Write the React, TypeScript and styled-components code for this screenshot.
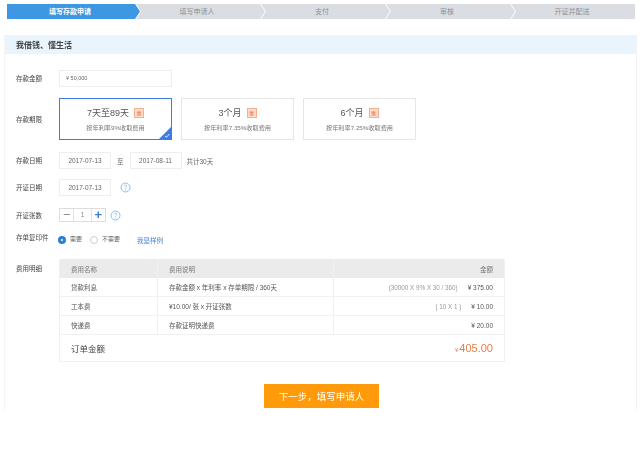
import React from "react";
import styled, { createGlobalStyle } from "styled-components";

const Global = createGlobalStyle`
  html, body { margin: 0; padding: 0; background: #fff; }
  body { font-family: "Liberation Sans", "Noto Sans CJK SC", sans-serif; color: #555; }
`;

const Page = styled.div`
  width: 640px;
  height: 468px;
  box-sizing: border-box;
  padding-top: 4px;
  overflow: hidden;
  filter: blur(0.45px);
`;

const Steps = styled.div`
  display: flex;
  margin: 0 5px 0 7px;
  height: 15px;
`;

const Step = styled.div<{ $active?: boolean; $first?: boolean; $last?: boolean }>`
  flex: ${p => (p.$first ? "0 0 133px" : p.$last ? "0 0 124px" : "0 0 129px")};
  margin-left: ${p => (p.$first ? "0" : "-4px")};
  height: 15px;
  background: ${p => (p.$active ? "#3d97e3" : "#dadde2")};
  color: ${p => (p.$active ? "#fff" : "#8d9197")};
  font-size: 7px;
  font-weight: ${p => (p.$active ? 700 : 400)};
  line-height: 15px;
  text-align: center;
  padding-right: ${p => (p.$last ? "2px" : "7px")};
  box-sizing: border-box;
  clip-path: ${p =>
    p.$first
      ? "polygon(0 0, calc(100% - 5px) 0, 100% 50%, calc(100% - 5px) 100%, 0 100%)"
      : p.$last
      ? "polygon(0 0, 100% 0, 100% 100%, 0 100%, 5px 50%)"
      : "polygon(0 0, calc(100% - 5px) 0, 100% 50%, calc(100% - 5px) 100%, 0 100%, 5px 50%)"};
`;

const Panel = styled.section`
  margin: 16px 3px 0 4px;
  height: 375px;
  border-left: 1px solid #f4f4f4;
  border-right: 1px solid #f2f2f2;
`;

const PanelTitle = styled.h1`
  margin: 0;
  height: 19px;
  background: #e9f4fc;
  padding-left: 11px;
  font-size: 8px;
  font-weight: 700;
  line-height: 21px;
  color: #444;
`;

const Form = styled.div`
  display: flex;
  flex-direction: column;
  padding: 16px 0 0 11px;
`;

const Row = styled.div<{ $h: number; $mb: number }>`
  display: flex;
  align-items: center;
  height: ${p => p.$h}px;
  margin-bottom: ${p => p.$mb}px;
`;

const Label = styled.div`
  flex: 0 0 43px;
  padding-bottom: 1px;
  font-size: 6.5px;
  color: #444;
`;

const Field = styled.div<{ $w: number }>`
  box-sizing: border-box;
  width: ${p => p.$w}px;
  height: 17px;
  border: 1px solid #eee;
  font-size: 6.5px;
  line-height: 15px;
  text-align: center;
  color: #666;
`;

const AmountField = styled(Field)`
  text-align: left;
  padding-left: 6px;
  font-size: 5.5px;
`;

const Note = styled.span<{ $mx: number }>`
  margin: 0 ${p => p.$mx}px;
  font-size: 6.5px;
  color: #666;
`;

const Cards = styled.div`
  display: flex;
  gap: 9px;
`;

const Card = styled.div<{ $selected?: boolean }>`
  position: relative;
  box-sizing: border-box;
  width: 113px;
  height: 42px;
  border: ${p => (p.$selected ? "1px solid #3f7bdc" : "1px solid #e6e6e6")};
  display: flex;
  flex-direction: column;
  align-items: center;
  justify-content: center;
  gap: 6px;
`;

const CardTitle = styled.div`
  display: flex;
  align-items: center;
  gap: 5px;
  font-size: 9px;
  color: #555;
  line-height: 10px;
`;

const Badge = styled.span`
  box-sizing: border-box;
  width: 10px;
  height: 10px;
  border: 1px solid #f7b08e;
  background: #fddccb;
  color: #e8683a;
  font-size: 5px;
  line-height: 8px;
  text-align: center;
`;

const CardNote = styled.div`
  font-size: 6.2px;
  line-height: 7px;
  color: #777;
`;

const Corner = styled.svg`
  position: absolute;
  right: 0;
  bottom: 0;
  width: 12px;
  height: 12px;
`;

const HelpIcon = styled.svg<{ $ml: number }>`
  width: 11px;
  height: 11px;
  margin-left: ${p => p.$ml}px;
`;

const Stepper = styled.div`
  display: flex;
  box-sizing: border-box;
  width: 47px;
  height: 14px;
  border: 1px solid #ddd;
`;

const StepCell = styled.div<{ $w: number; $blue?: boolean; $big?: boolean }>`
  width: ${p => p.$w}px;
  text-align: center;
  font-size: ${p => (p.$big ? 13 : 6.5)}px;
  font-weight: ${p => (p.$blue ? 700 : 400)};
  line-height: 12px;
  color: ${p => (p.$blue ? "#3a7fd0" : "#888")};
  & + & { border-left: 1px solid #e2e2e2; }
`;

const RadioDot = styled.span<{ $on?: boolean }>`
  box-sizing: border-box;
  width: 8px;
  height: 8px;
  border-radius: 50%;
  background: #fff;
  border: ${p => (p.$on ? "3px solid #2d7fd6" : "1px solid #ccc")};
  margin-right: 4px;
`;

const RadioText = styled.span<{ $mr: number }>`
  font-size: 6px;
  line-height: 7px;
  padding-bottom: 1px;
  color: #666;
  margin-right: ${p => p.$mr}px;
`;

const LinkText = styled.span`
  font-size: 6.5px;
  color: #4c84d0;
`;

const CopyRow = styled(Row)`
  align-items: flex-start;
`;

const CopyOptions = styled.div`
  display: flex;
  align-items: center;
  margin: 3px 0 0 -1px;
`;

const FeeRow = styled.div`
  display: flex;
  align-items: flex-start;
`;

const FeeLabel = styled(Label)`
  padding-top: 4px;
`;

const Table = styled.div`
  width: 446px;
  border: 1px solid #f1f1f1;
  border-top: 0;
  box-sizing: border-box;
`;

const TRow = styled.div<{ $head?: boolean }>`
  display: grid;
  grid-template-columns: 97px 176px 1fr;
  height: 19px;
  background: ${p => (p.$head ? "#ebebeb" : "#fff")};
  border-bottom: ${p => (p.$head ? "0" : "1px solid #f1f1f1")};
  box-sizing: border-box;
  font-size: 6.5px;
  color: ${p => (p.$head ? "#777" : "#555")};
`;

const Cell = styled.div<{ $right?: boolean; $head?: boolean }>`
  display: flex;
  align-items: center;
  justify-content: ${p => (p.$right ? "flex-end" : "flex-start")};
  padding: ${p => (p.$right ? "0 11px 0 0" : "0 0 0 11px")};
  & + & { border-left: 1px solid ${p => (p.$head ? "#e6e6e6" : "#f1f1f1")}; }
`;

const Formula = styled.span`
  color: #999;
  margin-right: 10px;
  font-size: 6.3px;
`;

const TotalRow = styled.div`
  display: flex;
  align-items: center;
  justify-content: space-between;
  height: 26px;
  padding: 0 11px;
`;

const TotalLabel = styled.span`
  font-size: 8.5px;
  color: #444;
`;

const TotalValue = styled.span`
  font-size: 11px;
  color: #ee7b45;
`;

const TotalYen = styled.span`
  font-size: 6px;
  margin-right: 1px;
`;

const Actions = styled.div`
  display: flex;
  justify-content: center;
  padding: 22px 9px 0 0;
`;

const NextButton = styled.button`
  width: 115px;
  height: 24px;
  border: 0;
  padding: 0;
  background: #ff9a0a;
  color: #fff;
  font: inherit;
  font-size: 9.5px;
`;

const Help = ({ ml }: { ml: number }) => (
  <HelpIcon $ml={ml} viewBox="0 0 11 11">
    <circle cx="5.5" cy="5.5" r="4.5" fill="none" stroke="#8fbbe6" strokeWidth="1" />
    <path d="M4.2 4.4a1.3 1.3 0 1 1 1.9 1.2c-.4.2-.6.5-.6 1" fill="none" stroke="#8fbbe6" strokeWidth=".8" />
    <circle cx="5.5" cy="8" r=".5" fill="#8fbbe6" />
  </HelpIcon>
);

const terms = [
  { t: "7天至89天", n: "按年利率9%收取费用", s: true },
  { t: "3个月", n: "按年利率7.35%收取费用" },
  { t: "6个月", n: "按年利率7.25%收取费用" },
];

const fees = [
  { a: "贷款利息", b: "存款金额 x 年利率 x 存单期限 / 360天", f: "(30000 X 9% X 30 / 360)", v: "¥ 375.00" },
  { a: "工本费", b: "¥10.00/ 张 x 开证张数", f: "( 10 X 1 )", v: "¥ 10.00" },
  { a: "快递费", b: "存款证明快递费", f: "", v: "¥ 20.00" },
];

export default function App() {
  return (
    <Page>
      <Global />
      <Steps>
        <Step $first $active>填写存款申请</Step>
        <Step>填写申请人</Step>
        <Step>支付</Step>
        <Step>审核</Step>
        <Step $last>开证并配送</Step>
      </Steps>
      <Panel>
        <PanelTitle>我借钱、懂生活</PanelTitle>
        <Form>
          <Row $h={17} $mb={11}>
            <Label>存款金额</Label>
            <AmountField $w={113}>¥ 50,000</AmountField>
          </Row>
          <Row $h={42} $mb={12}>
            <Label>存款期限</Label>
            <Cards>
              {terms.map(c => (
                <Card key={c.t} $selected={c.s}>
                  <CardTitle>{c.t}<Badge>惠</Badge></CardTitle>
                  <CardNote>{c.n}</CardNote>
                  {c.s && (
                    <Corner viewBox="0 0 12 12">
                      <path d="M12 0V12H0Z" fill="#3f7bdc" />
                      <path d="M6 9l1.5 1.2L10.5 7" fill="none" stroke="#fff" strokeWidth=".9" />
                    </Corner>
                  )}
                </Card>
              ))}
            </Cards>
          </Row>
          <Row $h={17} $mb={10}>
            <Label>存款日期</Label>
            <Field $w={52}>2017-07-13</Field>
            <Note $mx={6}>至</Note>
            <Field $w={52}>2017-08-11</Field>
            <Note $mx={5}>共计30天</Note>
          </Row>
          <Row $h={17} $mb={12}>
            <Label>开证日期</Label>
            <Field $w={52}>2017-07-13</Field>
            <Help ml={9} />
          </Row>
          <Row $h={14} $mb={10}>
            <Label>开证张数</Label>
            <Stepper>
              <StepCell $w={14} $big>−</StepCell>
              <StepCell $w={17}>1</StepCell>
              <StepCell $w={14} $big $blue>+</StepCell>
            </Stepper>
            <Help ml={4} />
          </Row>
          <CopyRow $h={16} $mb={11}>
            <Label>存单复印件</Label>
            <CopyOptions>
              <RadioDot $on />
              <RadioText $mr={8}>需要</RadioText>
              <RadioDot />
              <RadioText $mr={17}>不需要</RadioText>
              <LinkText>我是样例</LinkText>
            </CopyOptions>
          </CopyRow>
          <FeeRow>
            <FeeLabel>费用明细</FeeLabel>
            <Table>
              <TRow $head>
                <Cell $head>费用名称</Cell>
                <Cell $head>费用说明</Cell>
                <Cell $head $right>金额</Cell>
              </TRow>
              {fees.map(r => (
                <TRow key={r.a}>
                  <Cell>{r.a}</Cell>
                  <Cell>{r.b}</Cell>
                  <Cell $right>
                    {r.f && <Formula>{r.f}</Formula>}
                    {r.v}
                  </Cell>
                </TRow>
              ))}
              <TotalRow>
                <TotalLabel>订单金额</TotalLabel>
                <TotalValue><TotalYen>¥</TotalYen>405.00</TotalValue>
              </TotalRow>
            </Table>
          </FeeRow>
          <Actions>
            <NextButton>下一步，填写申请人</NextButton>
          </Actions>
        </Form>
      </Panel>
    </Page>
  );
}
